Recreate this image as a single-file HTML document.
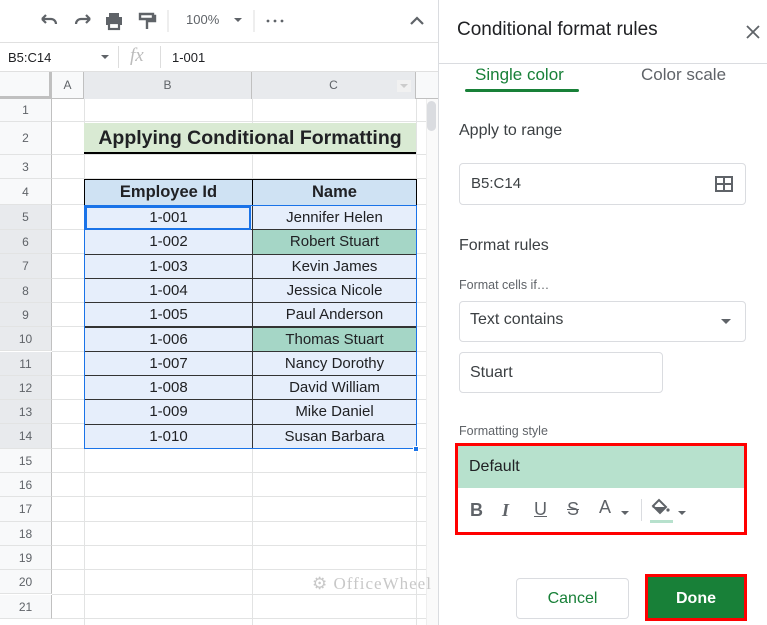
<!DOCTYPE html>
<html><head><meta charset="utf-8"><style>
*{box-sizing:border-box;margin:0;padding:0}
body{width:767px;height:625px;overflow:hidden;background:#fff;font-family:"Liberation Sans",Arial,sans-serif;position:relative;color:#202124}
.a{position:absolute}
.rh{position:absolute;left:0;width:52px;background:#f8f9fa;border-bottom:1px solid #e2e3e3;border-right:1px solid #c0c0c0;font-size:12px;color:#5f6368;text-align:center}
.cell{position:absolute;font-size:15px;text-align:center;border:1px solid #000}
.gl{position:absolute;background:#e2e3e3}
</style></head><body>
<div class="a" style="left:0;top:0;width:438px;height:43px;background:#fff;border-bottom:1px solid #e0e0e0"></div>
<svg class="a" style="left:38px;top:10px" width="400" height="22" viewBox="0 0 400 22" fill="none" stroke="#5f6368" stroke-width="2.2">
<path d="M4 9h9a5 5 0 0 1 5 5M4 9l4-4M4 9l4 4"/>
<path d="M52 9h-9a5 5 0 0 0-5 5M52 9l-4-4M52 9l-4 4"/>
<rect x="68" y="7" width="16" height="8" fill="#5f6368" stroke="none"/><rect x="71" y="3" width="10" height="4" fill="#5f6368" stroke="none"/><rect x="71" y="13" width="10" height="6" fill="#fff"/>
<path d="M102 4h13v5h-13zM115 6h2v5h-8v8" stroke-width="2.4"/>
<line x1="130" y1="0" x2="130" y2="22" stroke="#ddd" stroke-width="1"/>
<path d="M196 8l4 4 4-4z" fill="#5f6368" stroke="none"/>
<line x1="216" y1="0" x2="216" y2="22" stroke="#ddd" stroke-width="1"/>
<circle cx="230" cy="11" r="1.4" fill="#5f6368" stroke="none"/><circle cx="237" cy="11" r="1.4" fill="#5f6368" stroke="none"/><circle cx="244" cy="11" r="1.4" fill="#5f6368" stroke="none"/>
<path d="M373 14l6-6 6 6"/>
</svg>
<div class="a" style="left:186px;top:12px;font-size:13px;color:#5f6368">100%</div>
<div class="a" style="left:0;top:43px;width:438px;height:29px;border-bottom:1px solid #e0e0e0"></div>
<div class="a" style="left:8px;top:50px;font-size:13px">B5:C14</div>
<svg class="a" style="left:100px;top:54px" width="10" height="6"><path d="M1 1l4 4 4-4z" fill="#5f6368"/></svg>
<div class="a" style="left:118px;top:46px;width:1px;height:22px;background:#ddd"></div>
<div class="a" style="left:130px;top:45px;font-size:19px;color:#bbb;font-style:italic;font-family:'Liberation Serif',serif">fx</div>
<div class="a" style="left:160px;top:46px;width:1px;height:22px;background:#ddd"></div>
<div class="a" style="left:172px;top:50px;font-size:13px">1-001</div>
<div class="a" style="left:0;top:72px;width:438px;height:27px;background:#f8f9fa;border-bottom:1px solid #c0c0c0"></div>
<div class="a" style="left:0;top:72px;width:52px;height:27px;border-right:3px solid #c0c0c0;border-bottom:3px solid #c0c0c0"></div>
<div class="a" style="left:52px;top:72px;width:32px;height:27px;border-right:1px solid #c0c0c0;font-size:12px;color:#5f6368;text-align:center;line-height:27px">A</div>
<div class="a" style="left:84px;top:72px;width:168px;height:27px;background:#e8eaed;border-right:1px solid #c0c0c0;font-size:12px;color:#5f6368;text-align:center;line-height:27px">B</div>
<div class="a" style="left:252px;top:72px;width:164px;height:27px;background:#e8eaed;border-right:1px solid #c0c0c0;font-size:12px;color:#5f6368;text-align:center;line-height:27px">C</div>
<svg class="a" style="left:397px;top:80px" width="14" height="12"><rect width="14" height="12" fill="#f1f1f1"/><path d="M3 4l4 4 4-4z" fill="#ccc"/></svg>
<div class="a" style="left:426px;top:99px;width:12px;height:526px;background:#fafafa;border-left:1px solid #eee"></div>
<div class="a" style="left:427px;top:101px;width:9px;height:30px;background:#dadce0;border-radius:5px"></div>
<div id="rows"></div>
<div class="a" style="left:84px;top:123px;width:332px;height:31px;background:#d9ead3;border-bottom:2px solid #000;font-weight:bold;font-size:19.5px;text-align:center;line-height:31px">Applying Conditional Formatting</div>
<div id="tbl"></div>
<div class="a" style="left:312px;top:574px;font-family:'Liberation Serif',serif;font-size:17px;color:#c8c8c8;letter-spacing:1px">⚙ OfficeWheel</div>
<div class="a" style="left:438px;top:0;width:329px;height:625px;background:#fff;border-left:1px solid #dadce0"></div>
<div class="a" style="left:457px;top:19px;font-size:19px;color:#202124">Conditional format rules</div>
<svg class="a" style="left:746px;top:25px" width="14" height="14"><path d="M1 1l12 12M13 1L1 13" stroke="#5f6368" stroke-width="1.8"/></svg>
<div class="a" style="left:438px;top:63px;width:329px;height:1px;background:#dadce0"></div>
<div class="a" style="left:475px;top:65px;font-size:17px;color:#188038">Single color</div>
<div class="a" style="left:641px;top:65px;font-size:17px;color:#5f6368">Color scale</div>
<div class="a" style="left:465px;top:89px;width:114px;height:3px;background:#188038;border-radius:2px"></div>
<div class="a" style="left:459px;top:122px;font-size:16px;color:#3c4043">Apply to range</div>
<div class="a" style="left:459px;top:163px;width:287px;height:42px;border:1px solid #dadce0;border-radius:4px"></div>
<div class="a" style="left:471px;top:175px;font-size:15px;color:#3c4043">B5:C14</div>
<svg class="a" style="left:715px;top:176px" width="18" height="16"><rect x="1" y="1" width="16" height="14" fill="none" stroke="#5f6368" stroke-width="2"/><path d="M9 1v14M1 8h16" stroke="#5f6368" stroke-width="2"/></svg>
<div class="a" style="left:459px;top:237px;font-size:16px;color:#3c4043">Format rules</div>
<div class="a" style="left:459px;top:278px;font-size:12.5px;color:#5f6368">Format cells if…</div>
<div class="a" style="left:459px;top:301px;width:287px;height:41px;border:1px solid #dadce0;border-radius:4px"></div>
<div class="a" style="left:470px;top:311px;font-size:16px;color:#3c4043">Text contains</div>
<svg class="a" style="left:720px;top:318px" width="12" height="7"><path d="M1 1l5 5 5-5z" fill="#5f6368"/></svg>
<div class="a" style="left:459px;top:352px;width:204px;height:41px;border:1px solid #dadce0;border-radius:4px"></div>
<div class="a" style="left:470px;top:364px;font-size:16px;color:#3c4043">Stuart</div>
<div class="a" style="left:459px;top:424px;font-size:12.5px;color:#5f6368">Formatting style</div>
<div class="a" style="left:455px;top:443px;width:292px;height:92px;border:3px solid #f00"></div>
<div class="a" style="left:458px;top:446px;width:286px;height:42px;background:#b7e1cd"></div>
<div class="a" style="left:469px;top:458px;font-size:16px;color:#202124">Default</div>
<div class="a" style="left:470px;top:500px;font-size:18px;font-weight:bold;color:#5f6368">B</div>
<div class="a" style="left:502px;top:500px;font-size:18px;font-style:italic;color:#5f6368;font-family:'Liberation Serif',serif;font-weight:bold">I</div>
<div class="a" style="left:534px;top:499px;font-size:18px;color:#5f6368;text-decoration:underline">U</div>
<div class="a" style="left:567px;top:499px;font-size:18px;color:#5f6368;text-decoration:line-through">S</div>
<div class="a" style="left:599px;top:497px;font-size:18px;color:#5f6368">A</div>
<svg class="a" style="left:620px;top:510px" width="10" height="6"><path d="M1 1l4 4 4-4z" fill="#5f6368"/></svg>
<div class="a" style="left:641px;top:499px;width:1px;height:22px;background:#dadce0"></div>
<svg class="a" style="left:649px;top:498px" width="40" height="28"><path d="M4 8l6-6 7 7-6 6z" fill="none" stroke="#5f6368" stroke-width="2"/><path d="M3 9h13l-5 5z" fill="#5f6368"/><circle cx="19" cy="12" r="1.6" fill="#5f6368"/><rect x="1" y="22" width="23" height="3" fill="#b7e1cd"/><path d="M29 13l4 4 4-4z" fill="#5f6368"/></svg>
<div class="a" style="left:516px;top:578px;width:113px;height:41px;border:1px solid #dadce0;border-radius:4px;text-align:center;line-height:40px;font-size:16px;color:#188038">Cancel</div>
<div class="a" style="left:645px;top:574px;width:102px;height:47px;border:3px solid #f00;background:#188038;text-align:center;line-height:43px;font-size:16px;font-weight:bold;color:#fff">Done</div>
<script>
var tops=[99,122,155,179,205],h=[23,33,24,26,25];
for(var i=5;i<21;i++){tops.push(230+(i-5)*24.3);h.push(24.3);}
var s='';
for(var i=0;i<21;i++){
s+='<div class="rh" style="top:'+tops[i]+'px;height:'+h[i]+'px;line-height:'+h[i]+'px;'+(i>=4&&i<=13?'background:#e8eaed;':'')+'">'+(i+1)+'</div>';
s+='<div class="gl" style="left:52px;width:374px;height:1px;top:'+(tops[i]+h[i]-1)+'px"></div>';
}
s+='<div class="gl" style="left:84px;top:99px;width:1px;height:526px"></div><div class="gl" style="left:252px;top:99px;width:1px;height:526px"></div><div class="gl" style="left:416px;top:99px;width:1px;height:526px"></div>';
document.getElementById('rows').innerHTML=s;
var names=['Jennifer Helen','Robert Stuart','Kevin James','Jessica Nicole','Paul Anderson','Thomas Stuart','Nancy Dorothy','David William','Mike Daniel','Susan Barbara'];
var t='<div class="cell" style="left:84px;top:179px;width:169px;height:27px;background:#cfe2f3;font-weight:bold;font-size:16.5px;line-height:25px">Employee Id</div><div class="cell" style="left:252px;top:179px;width:165px;height:27px;background:#cfe2f3;font-weight:bold;font-size:16.5px;line-height:25px">Name</div>';
for(var i=0;i<10;i++){var y=205+i*24.3;var hl=(i==1||i==5);
t+='<div class="cell" style="left:84px;top:'+y+'px;width:169px;height:25.3px;background:#e6eefb;border-color:#333;line-height:23px">1-0'+(i<9?'0':'')+(i+1)+'</div>';
t+='<div class="cell" style="left:252px;top:'+y+'px;width:165px;height:25.3px;background:'+(hl?'#a5d6c6':'#e6eefb')+';border-color:#333;line-height:23px">'+names[i]+'</div>';}
t+='<div class="a" style="left:84px;top:205px;width:333px;height:244px;border:1px solid #1a73e8"></div>';
t+='<div class="a" style="left:85px;top:206px;width:166px;height:24px;border:2px solid #1a73e8"></div>';
t+='<div class="a" style="left:413px;top:446px;width:6px;height:6px;background:#1a73e8;border:1px solid #fff"></div>';
document.getElementById('tbl').innerHTML=t;
</script>
</body></html>
